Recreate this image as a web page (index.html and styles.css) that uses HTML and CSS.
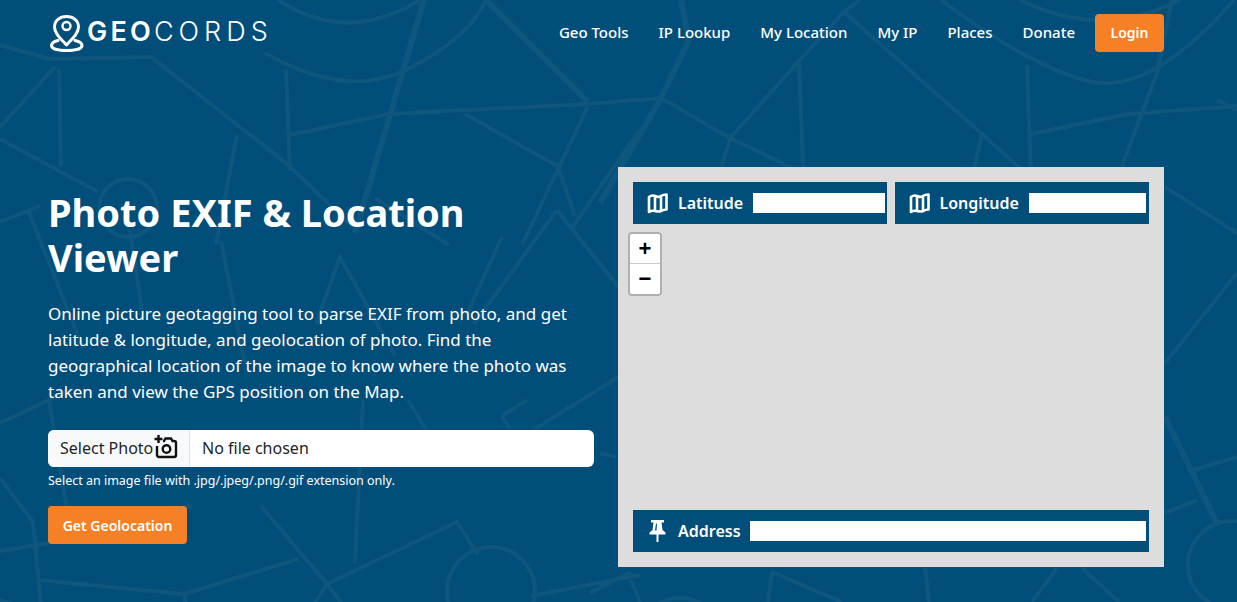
FILE: index.html
```html
<!DOCTYPE html>
<html lang="en">
<head>
<meta charset="utf-8">
<title>Photo EXIF &amp; Location Viewer</title>
<link rel="stylesheet" href="styles.css">
</head>
<body>
<div class="page">
  <svg class="roads" width="1237" height="602" viewBox="0 0 1237 602" aria-hidden="true">
    <path d="M0 45L49 59L151 57L286 163L355 229M55 67L0 127M59 69L61 167M0 139L98 192M237 135L216 245M286 69L290 171M290 135L388 114L465 110L588 104L661 98L730 138L840 191M465 114L559 167M588 106L559 167L522 245M559 170L575 216M640 130L571 229M375 198L449 245"/>
    <path class="thick" d="M424 0L355 233M486 0L588 102M681 0L689 40L661 98L600 203"/>
    <path d="M265 53Q347 100 408 69T486 0M278 0Q347 45 420 0M941 0Q1027 65 1088 81T1234 0M1020 0Q1100 40 1180 0"/>
    <circle cx="128" cy="208" r="29"/>
    <circle cx="868" cy="199" r="29"/>
    <circle cx="491" cy="591" r="44"/>
    <circle cx="1232" cy="565" r="44"/>
    <circle cx="680" cy="640" r="42"/>
    <path d="M730 138L710 207M730 138L799 61L844 12L860 0M799 61L803 167M844 12L982 134L1059 203M982 134L966 203M1027 65L1031 175M1031 134L1128 114L1237 106M1172 0L1157 73L1108 203M1217 100L1237 110M1165 187L1237 233M1165 363L1237 273M1193 470L1237 457M1165 513L1197 500"/>
    <path class="thick" d="M1165 417L1217 523"/>
    <path d="M0 222L40 206M28 210L83 348M130 230L142 310M221 241L245 364M316 324L340 257L395 356M502 237L466 316M557 210L474 324M557 210L620 289M0 423L75 388M506 447L620 376M506 447L514 460M0 478L33 522L45 647M49 400L69 522M0 551L49 543M69 526L192 506M37 580L184 594L298 559M184 594L192 647M0 600L41 612L110 647M261 506L327 584L375 647M363 400L355 563M327 584L457 522L478 555M531 596L640 575M327 584L286 647M502 416L527 400M502 416L510 429M408 400L433 441M600 453L616 457M590 593L631 572M631 580L640 602M772 572L842 602M772 572L768 602M925 568L929 602M1057 568L1032 602M1082 568L1119 602"/>
  </svg>

  <header class="topbar">
    <a class="logo" href="#">
      <svg class="logo-mark" width="34" height="37" viewBox="0 0 34 37" fill="none" aria-hidden="true">
        <path d="M16.500 30C10 23 4.500 18 4.500 12C4.500 5.500 9.800 1.500 16.500 1.500S28.500 5.500 28.500 12C28.500 18 23 23 16.500 30Z" stroke="#fff" stroke-width="3" stroke-linejoin="round"/>
        <circle cx="16.500" cy="11" r="4" stroke="#fff" stroke-width="2.400"/>
        <path d="M8 25.500C4 26.500 1.500 28.500 1.500 30.500C1.500 33.500 7 35.500 16.500 35.500S32 33.500 32 30.500C32 28.500 29.500 26.500 25 25.500" stroke="#fff" stroke-width="3" stroke-linecap="round"/>
      </svg>
      <span class="logo-text"><b>GEO</b>CORDS</span>
    </a>
    <nav class="nav">
      <a href="#">Geo Tools</a>
      <a href="#">IP Lookup</a>
      <a href="#">My Location</a>
      <a href="#">My IP</a>
      <a href="#">Places</a>
      <a href="#">Donate</a>
      <a class="btn btn-login" href="#">Login</a>
    </nav>
  </header>

  <main class="hero">
    <section class="intro">
      <h1>Photo EXIF &amp; Location Viewer</h1>
      <p class="lead">Online picture geotagging tool to parse EXIF from photo, and get latitude &amp; longitude, and geolocation of photo. Find the geographical location of the image to know where the photo was taken and view the GPS position on the Map.</p>
      <div class="file">
        <span class="file-btn">Select Photo<svg class="cam" width="24" height="24" viewBox="0 0 24 24" fill="none" stroke="#111" stroke-width="2.400" aria-hidden="true">
          <path d="M9 6H10L11.500 3.500H17L18.500 6H20A2 2 0 0 1 22 8V20A2 2 0 0 1 20 22H5A2 2 0 0 1 3 20V11"/>
          <circle cx="12.500" cy="14" r="3.800"/>
          <path d="M4.500 0V8M.5 4H8.500"/>
        </svg></span>
        <span class="file-name">No file chosen</span>
      </div>
      <small class="hint">Select an image file with .jpg/.jpeg/.png/.gif extension only.</small>
      <button class="btn btn-go" type="button">Get Geolocation</button>
    </section>

    <section class="map">
      <div class="zoom">
        <span class="zoom-btn">+</span>
        <span class="zoom-btn">−</span>
      </div>
      <div class="coords">
        <div class="bar bar-lat">
          <svg class="ico" width="21" height="22" viewBox="0 0 21 22" fill="none" stroke="#fff" stroke-width="2.600" stroke-linejoin="round" aria-hidden="true"><path d="M2 5C4.500 3 6 3 8 4S12.500 5 14 4S17 2.500 19.500 2.500V17.500C17 17.500 16 18 14 19S10 19.500 8 19S4.500 18.500 2 20ZM8 4V19M14 4V19"/></svg>
          <label>Latitude</label>
          <span class="field"></span>
        </div>
        <div class="bar bar-lng">
          <svg class="ico" width="21" height="22" viewBox="0 0 21 22" fill="none" stroke="#fff" stroke-width="2.600" stroke-linejoin="round" aria-hidden="true"><path d="M2 5C4.500 3 6 3 8 4S12.500 5 14 4S17 2.500 19.500 2.500V17.500C17 17.500 16 18 14 19S10 19.500 8 19S4.500 18.500 2 20ZM8 4V19M14 4V19"/></svg>
          <label>Longitude</label>
          <span class="field"></span>
        </div>
      </div>
      <div class="bar bar-addr">
        <svg class="ico" width="21" height="22" viewBox="0 0 21 22" fill="#fff" aria-hidden="true"><path d="M4 0H17V2.500H14.500L15.500 10L18.500 12.500V14.500H11.500V22H9.500V14.500H2.500V12.500L5.500 10L6.500 2.500H4Z"/><path d="M9 3.500H10L9.500 10.500H8Z" fill="#024e7a"/></svg>
        <label>Address</label>
        <span class="field"></span>
      </div>
    </section>
  </main>
</div>
</body>
</html>
```

FILE: styles.css
```css
* { box-sizing: border-box; }

html, body {
  margin: 0;
  height: 100%;
}

body {
  background: #024e7a;
  color: #fff;
  font-family: "Noto Sans", "Open Sans", sans-serif;
  overflow: hidden;
}

a { color: inherit; text-decoration: none; }

.page {
  position: relative;
  width: 1237px;
  height: 602px;
  padding: 0 73px 0 48px;
  overflow: hidden;
}

.roads {
  position: absolute;
  top: 0;
  left: 0;
  fill: none;
  stroke: #0f567f;
  stroke-width: 4;
}

.roads .thick { stroke-width: 6; }

.topbar {
  position: relative;
  display: flex;
  justify-content: space-between;
  align-items: center;
  height: 66px;
}

.logo {
  display: flex;
  align-items: center;
  gap: 3px;
  height: 66px;
  padding-left: 2px;
}

.logo-text {
  font-family: Inter, Roboto, sans-serif;
  font-size: 27px;
  font-weight: 300;
  letter-spacing: 5px;
  line-height: 1;
  margin-top: -3px;
}

.logo-text b {
  font-weight: 600;
  letter-spacing: 3.2px;
}

.nav {
  display: flex;
  align-items: center;
  gap: 30px;
  font-size: 15px;
  font-weight: 500;
}

.nav a { padding-bottom: 2px; }

.btn {
  display: inline-flex;
  align-items: center;
  justify-content: center;
  background: #f58025;
  color: #fff;
  border: 0;
  border-radius: 4px;
  font-family: inherit;
  font-size: 14px;
  font-weight: 600;
}

.btn-login {
  width: 69px;
  height: 38px;
  margin-left: -10px;
}

.hero {
  position: relative;
  display: grid;
  grid-template-columns: 546px 546px;
  gap: 24px;
  padding-top: 101px;
}

.intro { padding-top: 23px; }

h1 {
  margin: 0 0 21px;
  font-size: 38px;
  font-weight: 700;
  line-height: 45px;
}

.lead {
  margin: 0 0 25px;
  font-size: 17px;
  line-height: 26px;
}

.file {
  display: flex;
  height: 37px;
  background: #fff;
  border-radius: 6px;
  overflow: hidden;
  color: #212529;
  font-size: 16px;
  line-height: 37px;
}

.file-btn {
  display: flex;
  align-items: center;
  width: 142px;
  padding-left: 12px;
  background: #f8f9fa;
  border-right: 1px solid #dee2e6;
}

.cam { flex: none; margin-left: 1px; margin-top: -3px; }

.file-name { padding-left: 12px; }

.hint {
  display: block;
  margin-top: 5px;
  font-size: 12.500px;
  line-height: 18px;
}

.btn-go {
  display: flex;
  width: 139px;
  height: 38px;
  margin-top: 16px;
}

.map {
  position: relative;
  display: flex;
  flex-direction: column;
  justify-content: space-between;
  height: 400px;
  padding: 15px;
  background: #ddd;
}

.coords {
  display: flex;
  gap: 8px;
}

.bar {
  display: flex;
  align-items: center;
  height: 42px;
  background: #024e7a;
  padding-left: 14px;
  padding-right: 3px;
  font-size: 16px;
  font-weight: 600;
}

.bar-lat, .bar-lng { flex: 1; }

.bar-lat { padding-right: 2px; }

.ico { flex: none; margin-right: 10px; }

.bar label { flex: none; margin-right: 10px; }

.bar-addr label { margin-right: 9px; }

.field {
  flex: 1;
  height: 20px;
  background: #fff;
}

.zoom {
  position: absolute;
  top: 65px;
  left: 10px;
  width: 34px;
  height: 64px;
  display: flex;
  flex-direction: column;
  border: 2px solid rgba(0, 0, 0, .2);
  border-radius: 4px;
  background-clip: padding-box;
}

.zoom-btn {
  height: 30px;
  background: #fff;
  color: #000;
  text-align: center;
  font-family: "Liberation Sans", sans-serif;
  font-size: 22px;
  font-weight: 700;
  line-height: 30px;
}

.zoom-btn:first-child {
  border-bottom: 1px solid #ccc;
  border-radius: 2px 2px 0 0;
}

.zoom-btn:last-child { border-radius: 0 0 2px 2px; }
```
